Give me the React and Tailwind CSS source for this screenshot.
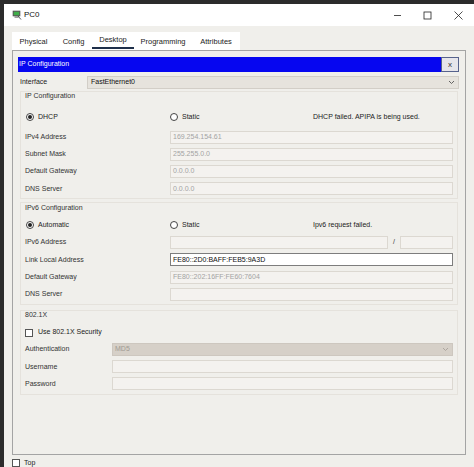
import React from 'react';

const font = { fontFamily: '"Liberation Sans", Arial, sans-serif' };

const Chevron = ({ color = '#555' }) => (
  <svg width="7" height="5" viewBox="0 0 7 5" className="shrink-0">
    <polyline points="1,1 3.5,3.5 6,1" fill="none" stroke={color} strokeWidth="0.9" />
  </svg>
);

const Radio = ({ checked, label }) => (
  <div className="flex items-center gap-[4px]">
    <div className="w-[8px] h-[8px] rounded-full border border-[#444] bg-white flex items-center justify-center">
      {checked && <div className="w-[4px] h-[4px] rounded-full bg-[#222]" />}
    </div>
    <span className="text-[7px] text-[#222]">{label}</span>
  </div>
);

const Box = ({ value, active, className = '' }) => (
  <div
    className={`h-[13px] border flex items-center px-[2px] text-[7px] ${
      active
        ? 'bg-white border-[#7d7d7d] text-[#111]'
        : 'bg-[#f4f2ef] border-[#dcd8d1] text-[#a3a3a3]'
    } ${className}`}
  >
    {value}
  </div>
);

const Row = ({ label, labelWidth = 'w-[145px]', children, className = '' }) => (
  <div className={`flex items-center h-[13px] ${className}`}>
    <div className={`${labelWidth} shrink-0 text-[7px] text-[#333]`}>{label}</div>
    <div className="flex-1 flex items-center">{children}</div>
  </div>
);

const Group = ({ title, className = '', children }) => (
  <div className={`ml-[2px] mr-[1px] border border-[#e5e2dc] pl-[4px] pr-[4px] ${className}`}>
    <div className="h-[9px] flex items-center text-[7px] text-[#333]">{title}</div>
    {children}
  </div>
);

export default function App() {
  return (
    <div className="w-[474px] h-[467px] bg-[#2b2b2b] pt-[4px] pl-[4px] overflow-hidden" style={font}>
      <div className="h-full bg-[#f0efeb] flex flex-col">
        {/* title bar */}
        <div className="h-[22px] bg-white flex items-center shrink-0">
          <svg width="10" height="10" viewBox="0 0 10 10" className="ml-[8px]">
            <rect x="1" y="1" width="7" height="5" fill="#5a7a5a" stroke="#4a4a4a" strokeWidth="0.6" />
            <rect x="2" y="2" width="5" height="3" fill="#3fae49" />
            <rect x="2.5" y="6.5" width="4" height="1.2" fill="#777" />
            <polyline points="6,6 9,9.5" stroke="#333" strokeWidth="0.8" />
          </svg>
          <span className="ml-[2px] text-[8px] text-[#111]">PC0</span>
          <div className="ml-auto flex items-center">
            <svg width="9" height="9" viewBox="0 0 9 9" className="mr-[21px]">
              <line x1="1" y1="4.5" x2="8" y2="4.5" stroke="#222" strokeWidth="0.8" />
            </svg>
            <svg width="9" height="9" viewBox="0 0 9 9" className="mr-[22px]">
              <rect x="1" y="1" width="7" height="7" fill="none" stroke="#222" strokeWidth="0.8" />
            </svg>
            <svg width="9" height="9" viewBox="0 0 9 9" className="mr-[11px]">
              <line x1="0.5" y1="0.5" x2="8.5" y2="8.5" stroke="#222" strokeWidth="0.8" />
              <line x1="8.5" y1="0.5" x2="0.5" y2="8.5" stroke="#222" strokeWidth="0.8" />
            </svg>
          </div>
        </div>

        {/* tabs */}
        <div className="h-[24px] shrink-0 pt-[6px] pl-[8px]">
          <div className="w-[228px] h-[18px] bg-white flex items-end text-[7.5px] text-[#222]">
            <div className="w-[43px] h-[17px] flex items-center justify-center">Physical</div>
            <div className="w-[37px] h-[17px] flex items-center justify-center">Config</div>
            <div className="w-[42px] h-[17px] mb-[1px] flex items-center justify-center border-b-2 border-[#1e2f4a]">Desktop</div>
            <div className="w-[58px] h-[17px] flex items-center justify-center">Programming</div>
            <div className="w-[48px] h-[17px] flex items-center justify-center">Attributes</div>
          </div>
        </div>

        {/* panel */}
        <div className="ml-[8px] mr-[8px] h-[405px] shrink-0 border border-[#a4a4a4] pl-[5px] pr-[6px] pt-[6px]">
          <div className="flex h-[15px]">
            <div className="flex-1 bg-[#0606f0] text-white text-[7px] flex items-center pl-[1px]">IP Configuration</div>
            <div className="w-[18px] bg-[#e6e5ea] border border-[#56628c] flex items-center justify-center text-[8px] text-[#333]">x</div>
          </div>

          <div className="mt-[4px] ml-[2px] flex items-center h-[13px]">
            <div className="w-[67px] text-[7px] text-[#222]">Interface</div>
            <div className="flex-1 h-[13px] bg-[#e6e3dd] border border-[#d2cec7] flex items-center justify-between pl-[3px] pr-[3px] text-[7px] text-[#111]">
              <span>FastEthernet0</span>
              <Chevron />
            </div>
          </div>

          <Group title="IP Configuration" className="mt-[2px] pb-[3px]">
            <div className="mt-[9.5px] h-[13px] flex items-center">
              <div className="w-[145px] pl-[1px]"><Radio checked label="DHCP" /></div>
              <div className="w-[143px]"><Radio label="Static" /></div>
              <span className="text-[7px] text-[#222]">DHCP failed. APIPA is being used.</span>
            </div>
            <Row label="IPv4 Address" className="mt-[7px]"><Box value="169.254.154.61" className="flex-1" /></Row>
            <Row label="Subnet Mask" className="mt-[4.3px]"><Box value="255.255.0.0" className="flex-1" /></Row>
            <Row label="Default Gateway" className="mt-[4.3px]"><Box value="0.0.0.0" className="flex-1" /></Row>
            <Row label="DNS Server" className="mt-[4.3px]"><Box value="0.0.0.0" className="flex-1" /></Row>
          </Group>

          <Group title="IPv6 Configuration" className="mt-[3px] pb-[3px]">
            <div className="mt-[6.5px] h-[13px] flex items-center">
              <div className="w-[145px] pl-[1px]"><Radio checked label="Automatic" /></div>
              <div className="w-[143px]"><Radio label="Static" /></div>
              <span className="text-[7px] text-[#222]">Ipv6 request failed.</span>
            </div>
            <Row label="IPv6 Address" className="mt-[4px]">
              <Box value="" className="w-[218px]" />
              <span className="w-[12px] text-center text-[7px] text-[#333]">/</span>
              <Box value="" className="flex-1" />
            </Row>
            <Row label="Link Local Address" className="mt-[4.4px]"><Box active value="FE80::2D0:BAFF:FEB5:9A3D" className="flex-1" /></Row>
            <Row label="Default Gateway" className="mt-[4.4px]"><Box value="FE80::202:16FF:FE60:7604" className="flex-1" /></Row>
            <Row label="DNS Server" className="mt-[4.4px]"><Box value="" className="flex-1" /></Row>
          </Group>

          <Group title="802.1X" className="mt-[5px] pb-[4px]">
            <div className="mt-[6px] h-[13px] flex items-center gap-[5px]">
              <div className="w-[8px] h-[8px] border border-[#555] bg-white" />
              <span className="text-[7px] text-[#222]">Use 802.1X Security</span>
            </div>
            <Row label="Authentication" labelWidth="w-[87px]" className="mt-[4px]">
              <div className="flex-1 h-[13px] bg-[#d6d0c8] border border-[#cdc7bf] flex items-center justify-between pl-[2px] pr-[3px] text-[7px] text-[#a19b93]">
                <span>MD5</span>
                <Chevron color="#a8a29a" />
              </div>
            </Row>
            <Row label="Username" labelWidth="w-[87px]" className="mt-[4.2px]"><Box value="" className="flex-1" /></Row>
            <Row label="Password" labelWidth="w-[87px]" className="mt-[4.2px]"><Box value="" className="flex-1" /></Row>
          </Group>
        </div>

        {/* bottom */}
        <div className="mt-[3px] ml-[8px] flex items-center gap-[4px]">
          <div className="w-[8px] h-[8px] border border-[#555] bg-white" />
          <span className="text-[7px] text-[#222]">Top</span>
        </div>
      </div>
    </div>
  );
}
